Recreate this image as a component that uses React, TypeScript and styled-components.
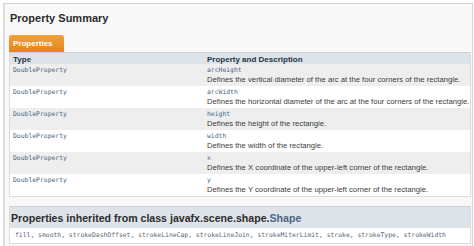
import React from 'react';
import styled, { createGlobalStyle } from 'styled-components';

const GlobalStyle = createGlobalStyle`
    html, body {
        margin: 0;
        padding: 0;
        background: #ffffff;
        overflow: hidden;
    }
    body {
        font-family: "Liberation Sans", Arial, sans-serif;
        color: #353833;
    }
`;

const Page = styled.div`
    width: 474px;
    height: 246px;
    padding: 3px 1px 0 3px;
    box-sizing: border-box;
    overflow: hidden;
`;

const Block = styled.div`
    height: 100%;
    box-sizing: border-box;
    background: #f8f8f8;
    border-top: 1px solid #d4d4d4;
    border-left: 2px solid #dcdcdc;
    border-right: 1px solid #d4d4d4;
    padding: 7px 1px 0 4px;
`;

const Heading = styled.h3`
    margin: 0 0 0 1px;
    font-size: 11px;
    line-height: 14px;
    font-weight: bold;
    color: #2c2c2c;
`;

const Tab = styled.div`
    display: inline-block;
    margin-top: 10px;
    height: 17px;
    padding: 0 11px 0 4px;
    box-sizing: border-box;
    border-radius: 3px 3px 0 0;
    background: linear-gradient(#f5a03a, #e2861b);
    color: #ffffff;
    font-size: 8px;
    font-weight: bold;
    line-height: 18px;
`;

const Table = styled.div`
    border: 1px solid #dcdcdc;
    border-top: none;
    background: #ffffff;
`;

const Row = styled.div<{ $shade?: 'head' | 'gray' | 'white' }>`
    display: grid;
    grid-template-columns: 194px 1fr;
    background: ${p =>
        p.$shade === 'head' ? '#dee3e9' : p.$shade === 'gray' ? '#eeeeef' : '#ffffff'};
    border-top: ${p => (p.$shade === 'head' ? '1px solid #c9d0d8' : 'none')};
    height: ${p => (p.$shade === 'head' ? '11px' : '22px')};
`;

const Cell = styled.div`
    padding: 1px 0 0 3px;
    overflow: hidden;
    white-space: nowrap;
`;

const HeadText = styled.div`
    font-size: 8px;
    font-weight: bold;
    line-height: 11px;
    color: #253441;
`;

const Code = styled.div`
    font-family: "DejaVu Sans Mono", "Liberation Mono", monospace;
    font-size: 6.4px;
    line-height: 10px;
    color: #4a6782;
`;

const Desc = styled.div`
    font-size: 7.7px;
    line-height: 10px;
    color: #3d3d3d;
`;

const Inherited = styled.div`
    margin-top: 9px;
    border: 1px solid #dcdcdc;
    border-top: none;
    background: #ffffff;
`;

const InheritedHead = styled.h4`
    margin: 0;
    height: 21px;
    padding-left: 1px;
    background: #dee3e9;
    border-top: 1px solid #c9d0d8;
    font-size: 10.6px;
    font-weight: bold;
    line-height: 22px;
    color: #2c2c2c;
    white-space: nowrap;
`;

const Link = styled.span`
    color: #4a6782;
`;

const InheritedList = styled.div`
    padding: 2px 0 2px 5px;
    font-family: "DejaVu Sans Mono", "Liberation Mono", monospace;
    font-size: 6.4px;
    line-height: 11px;
    color: #5a6877;
    white-space: nowrap;
    overflow: hidden;
`;

interface Prop {
    name: string;
    desc: string;
}

const props: Prop[] = [
    { name: 'arcHeight', desc: 'Defines the vertical diameter of the arc at the four corners of the rectangle.' },
    { name: 'arcWidth', desc: 'Defines the horizontal diameter of the arc at the four corners of the rectangle.' },
    { name: 'height', desc: 'Defines the height of the rectangle.' },
    { name: 'width', desc: 'Defines the width of the rectangle.' },
    { name: 'x', desc: 'Defines the X coordinate of the upper-left corner of the rectangle.' },
    { name: 'y', desc: 'Defines the Y coordinate of the upper-left corner of the rectangle.' },
];

const inherited = [
    'fill',
    'smooth',
    'strokeDashOffset',
    'strokeLineCap',
    'strokeLineJoin',
    'strokeMiterLimit',
    'stroke',
    'strokeType',
    'strokeWidth',
];

const App = () => (
    <Page>
        <GlobalStyle />
        <Block>
            <Heading>Property Summary</Heading>
            <Tab>Properties</Tab>
            <Table>
                <Row $shade="head">
                    <Cell>
                        <HeadText>Type</HeadText>
                    </Cell>
                    <Cell>
                        <HeadText>Property and Description</HeadText>
                    </Cell>
                </Row>
                {props.map((p, i) => (
                    <Row key={p.name} $shade={i % 2 === 0 ? 'gray' : 'white'}>
                        <Cell>
                            <Code>DoubleProperty</Code>
                        </Cell>
                        <Cell>
                            <Code>{p.name}</Code>
                            <Desc>{p.desc}</Desc>
                        </Cell>
                    </Row>
                ))}
            </Table>
            <Inherited>
                <InheritedHead>
                    Properties inherited from class javafx.scene.shape.<Link>Shape</Link>
                </InheritedHead>
                <InheritedList>{inherited.join(', ')}</InheritedList>
            </Inherited>
        </Block>
    </Page>
);

export default App;
